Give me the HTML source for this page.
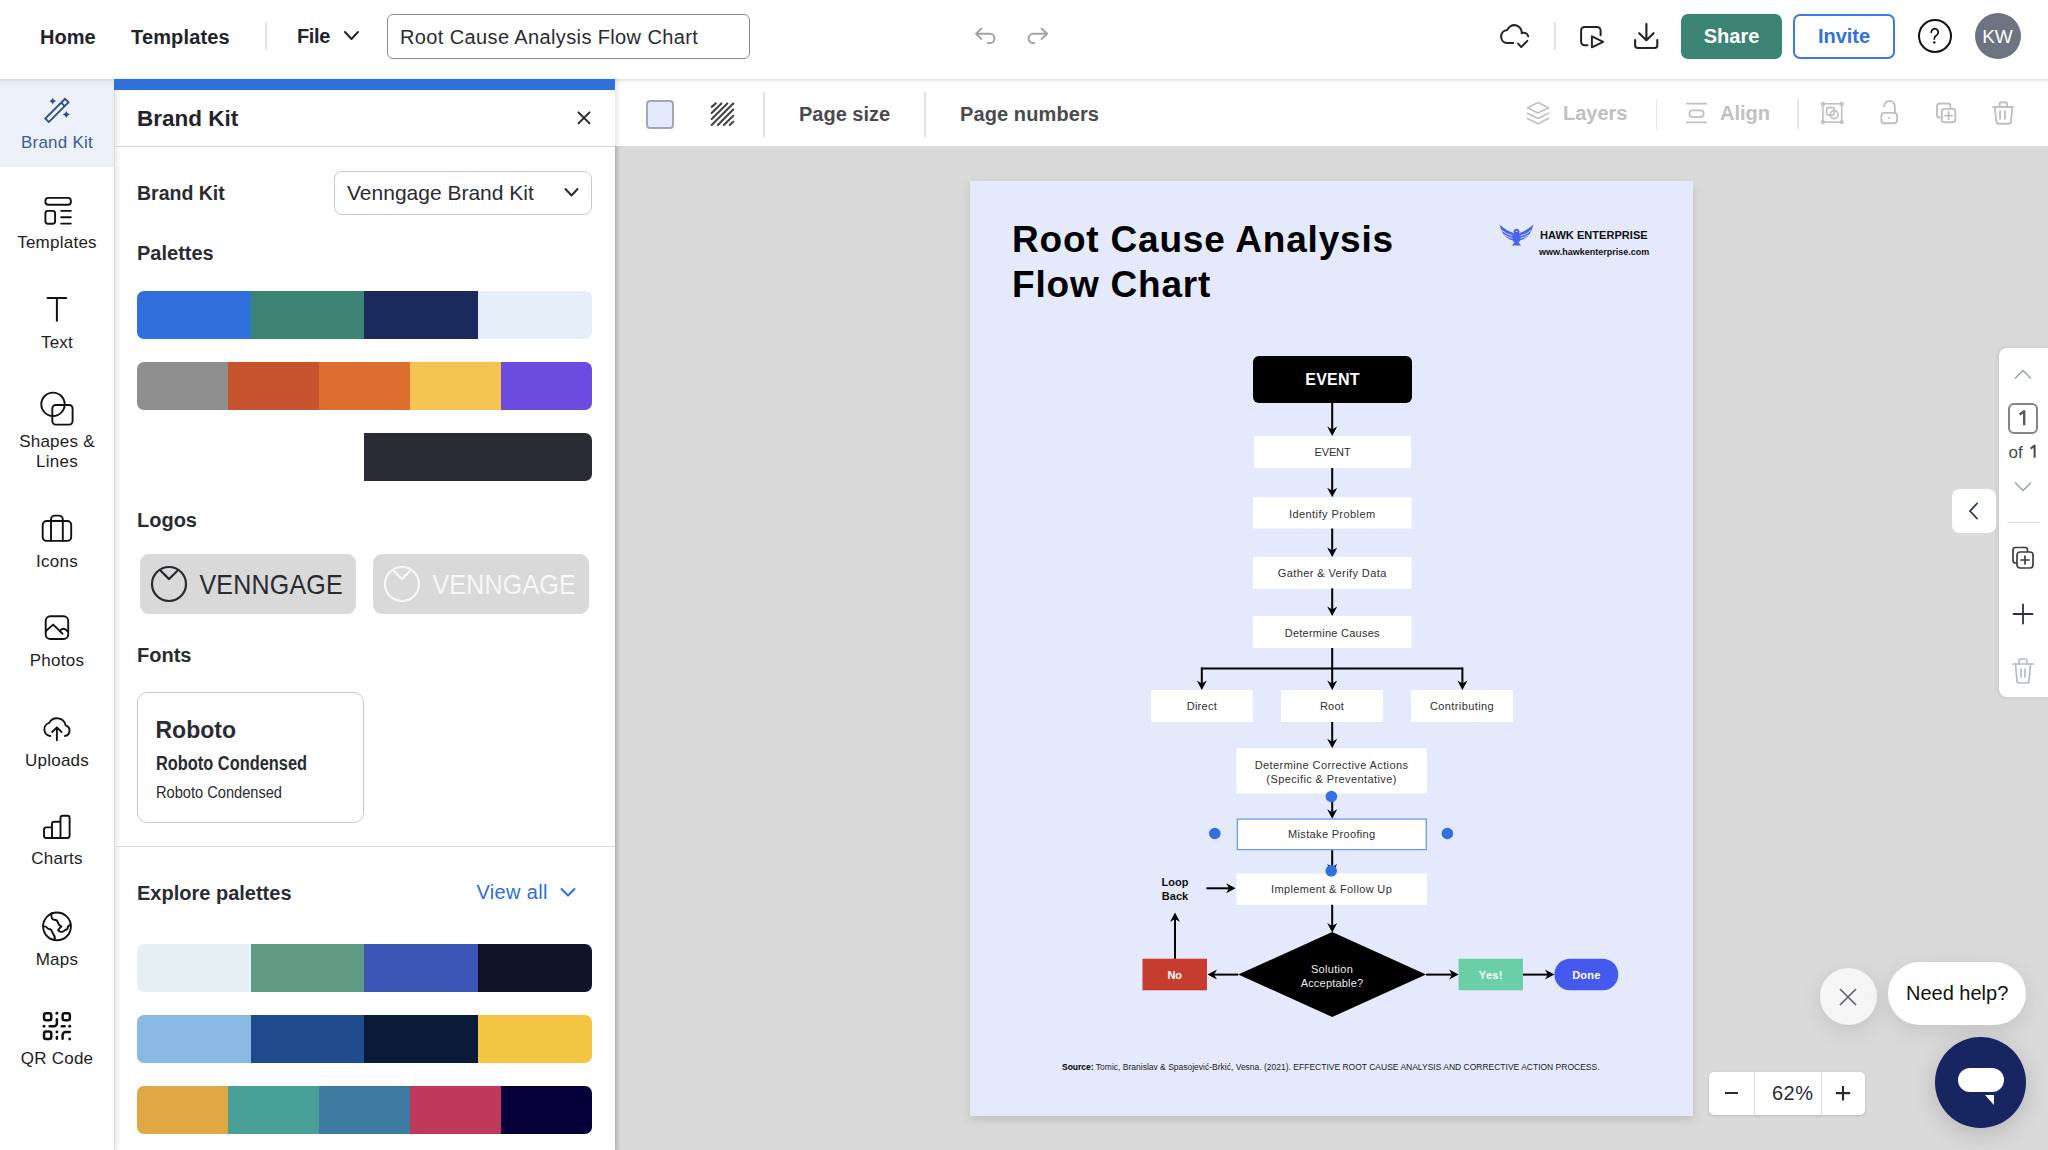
<!DOCTYPE html><html><head><meta charset="utf-8"><style>
html,body{margin:0;padding:0;}
body{width:2048px;height:1150px;position:relative;overflow:hidden;background:#dadada;font-family:"Liberation Sans", sans-serif;}
.a{position:absolute;box-sizing:border-box;}
.t{position:absolute;white-space:nowrap;}
</style></head><body>

<div class="a" style="left:615px;top:146px;width:1433px;height:1004px;background:#dadada;"></div>
<div class="a" style="left:970px;top:181px;width:723px;height:935px;background:#e4e9fc;box-shadow:0 4px 10px rgba(0,0,0,0.12);"></div>
<div class="a" style="left:0px;top:0px;width:2048px;height:79px;background:#fff;"></div>
<div style="position:absolute;left:0;top:0;width:2048px;height:79px;">
<div class="t" style="left:40px;top:26.50px;font-size:20px;font-weight:700;color:#23232b;line-height:20px;">Home</div>
<div class="t" style="left:131px;top:26.50px;font-size:20px;font-weight:700;color:#23232b;line-height:20px;letter-spacing:0.15px;">Templates</div>
<div class="a" style="left:265px;top:22px;width:2px;height:28px;background:#e3e3e3;"></div>
<div class="t" style="left:297px;top:26.00px;font-size:20px;font-weight:700;color:#23232b;line-height:20px;letter-spacing:-0.4px;">File</div>
<svg class="a" style="left:342px;top:28px;" width="20" height="16" viewBox="0 0 20 16" fill="none"><polyline points="3,4 9.5,11 16,4" stroke="#23232b" stroke-width="2" stroke-linecap="round" stroke-linejoin="round"/></svg>
<div class="a" style="left:387px;top:14px;width:363px;height:45px;border:1.5px solid #8c8c8c;border-radius:6px;background:#fff;"></div>
<div class="t" style="left:400px;top:26.50px;font-size:20px;font-weight:400;color:#2b2b33;line-height:20px;letter-spacing:0.38px;">Root Cause Analysis Flow Chart</div>
<svg class="a" style="left:972px;top:24px;" width="28" height="24" viewBox="0 0 28 24" fill="none"><path d="M9.2,4.7 L4.1,9.8 L9.2,14.9 M4.1,9.8 H17.8 A4.65,4.65 0 0 1 17.8,19.1 H15.8" stroke="#a2a2a8" stroke-width="2" stroke-linecap="round" stroke-linejoin="round"/></svg>
<svg class="a" style="left:1024px;top:24px;" width="28" height="24" viewBox="0 0 28 24" fill="none"><path d="M17.5,4.7 L23.2,9.8 L17.5,14.9 M23.2,9.8 H9.2 A4.65,4.65 0 0 0 9.2,19.1 H10.2" stroke="#a2a2a8" stroke-width="2" stroke-linecap="round" stroke-linejoin="round"/></svg>
<svg class="a" style="left:1496px;top:20px;" width="36" height="32" viewBox="0 0 36 32" fill="none"><path d="M17.3,23.1 H10.7 A6.6,6.6 0 0 1 11.2,10 A7.5,7.5 0 0 1 25.7,13.2 A4.6,4.6 0 0 1 32.2,16.3" stroke="#23232b" stroke-width="2" stroke-linecap="round" stroke-linejoin="round"/><path d="M22.1,23.6 L25.2,27.1 L31.3,20.9" stroke="#23232b" stroke-width="2" stroke-linecap="round" stroke-linejoin="round"/></svg>
<div class="a" style="left:1554px;top:22px;width:2px;height:28px;background:#e3e3e3;"></div>
<svg class="a" style="left:1576px;top:22px;" width="32" height="30" viewBox="0 0 32 30" fill="none"><path d="M11.5,23.2 H8.6 A3.5,3.5 0 0 1 5.1,19.7 V8.5 A3.5,3.5 0 0 1 8.6,5 H21.1 A3.5,3.5 0 0 1 24.6,8.5 V13.2" stroke="#23232b" stroke-width="2" stroke-linecap="round" stroke-linejoin="round"/><path d="M15.9,14.3 L27.2,19.8 L15.9,25.3 Z" stroke="#23232b" stroke-width="2" stroke-linejoin="round"/></svg>
<svg class="a" style="left:1630px;top:20px;" width="32" height="32" viewBox="0 0 32 32" fill="none"><path d="M16.4,4 V20 M9.2,13.2 L16.4,20.3 L23.6,13.2 M5.1,20 V25.3 A2.7,2.7 0 0 0 7.8,28 H24.6 A2.7,2.7 0 0 0 27.3,25.3 V20" stroke="#23232b" stroke-width="2.1" stroke-linecap="round" stroke-linejoin="round"/></svg>
<div class="a" style="left:1681px;top:13.5px;width:101px;height:45.5px;background:#3b8474;border-radius:7px;"></div>
<div class="t" style="left:1681px;top:26.00px;font-size:20px;font-weight:700;color:#fff;line-height:20px;width:101px;text-align:center;">Share</div>
<div class="a" style="left:1793px;top:14px;width:102px;height:45px;border:2px solid #3b78e7;border-radius:7px;background:#fff;"></div>
<div class="t" style="left:1793px;top:26.00px;font-size:20px;font-weight:700;color:#3270dc;line-height:20px;width:102px;text-align:center;">Invite</div>
<svg class="a" style="left:1916px;top:17px;" width="38" height="38" viewBox="0 0 38 38" fill="none"><circle cx="19" cy="19" r="16" stroke="#111" stroke-width="2"/><path d="M15.3,15.2 A3.5,3.5 0 1 1 20.6,18.2 Q18.3,19.4 18.3,22" stroke="#111" stroke-width="1.7" stroke-linecap="round"/><circle cx="18.3" cy="25.4" r="1.2" fill="#111"/></svg>
<div class="a" style="left:1974.5px;top:13px;width:46px;height:46px;background:#6b7480;border-radius:50%;"></div>
<div class="t" style="left:1974.5px;top:27.00px;font-size:19px;font-weight:400;color:#fff;line-height:19px;width:46px;text-align:center;">KW</div>
</div>
<div class="a" style="left:0px;top:79px;width:114px;height:1071px;background:#fff;"></div>
<div class="a" style="left:0px;top:79px;width:114px;height:88px;background:#ebf0f9;"></div>
<div class="t" style="left:0px;top:134.10px;font-size:17px;font-weight:400;color:#3d5b92;line-height:17px;letter-spacing:0.25px;width:114px;text-align:center;">Brand Kit</div>
<div class="t" style="left:0px;top:233.50px;font-size:17px;font-weight:400;color:#1d1d24;line-height:17px;letter-spacing:0.25px;width:114px;text-align:center;">Templates</div>
<div class="t" style="left:0px;top:333.50px;font-size:17px;font-weight:400;color:#1d1d24;line-height:17px;letter-spacing:0.25px;width:114px;text-align:center;">Text</div>
<div class="t" style="left:0px;top:433.40px;font-size:17px;font-weight:400;color:#1d1d24;line-height:17px;letter-spacing:0.25px;width:114px;text-align:center;">Shapes &amp;</div>
<div class="t" style="left:0px;top:552.60px;font-size:17px;font-weight:400;color:#1d1d24;line-height:17px;letter-spacing:0.25px;width:114px;text-align:center;">Icons</div>
<div class="t" style="left:0px;top:652.10px;font-size:17px;font-weight:400;color:#1d1d24;line-height:17px;letter-spacing:0.25px;width:114px;text-align:center;">Photos</div>
<div class="t" style="left:0px;top:751.80px;font-size:17px;font-weight:400;color:#1d1d24;line-height:17px;letter-spacing:0.25px;width:114px;text-align:center;">Uploads</div>
<div class="t" style="left:0px;top:850.40px;font-size:17px;font-weight:400;color:#1d1d24;line-height:17px;letter-spacing:0.25px;width:114px;text-align:center;">Charts</div>
<div class="t" style="left:0px;top:950.70px;font-size:17px;font-weight:400;color:#1d1d24;line-height:17px;letter-spacing:0.25px;width:114px;text-align:center;">Maps</div>
<div class="t" style="left:0px;top:1049.90px;font-size:17px;font-weight:400;color:#1d1d24;line-height:17px;letter-spacing:0.25px;width:114px;text-align:center;">QR Code</div>
<div class="t" style="left:0px;top:453.00px;font-size:17px;font-weight:400;color:#1d1d24;line-height:17px;letter-spacing:0.25px;width:114px;text-align:center;">Lines</div>
<svg class="a" style="left:0;top:0" width="114" height="1150" viewBox="0 0 114 1150"><g transform="translate(56.9,110.4) rotate(-45)" stroke="#2f4f85" stroke-width="1.9" fill="none" stroke-linejoin="miter"><rect x="-13.9" y="-2.5" width="27.8" height="5"/><line x1="8.6" y1="-2.5" x2="8.6" y2="2.5"/></g><path d="M52.7,97.69999999999999 Q53.448,100.35199999999999 56.1,101.1 Q53.448,101.848 52.7,104.5 Q51.952000000000005,101.848 49.300000000000004,101.1 Q51.952000000000005,100.35199999999999 52.7,97.69999999999999 Z" fill="#2f4f85"/><path d="M66.3,110.9 Q67.092,113.708 69.89999999999999,114.5 Q67.092,115.292 66.3,118.1 Q65.508,115.292 62.699999999999996,114.5 Q65.508,113.708 66.3,110.9 Z" fill="#2f4f85"/><g stroke="#111" stroke-width="1.9" fill="none" stroke-linecap="round" stroke-linejoin="round"><rect x="45.4" y="197.9" width="25.5" height="6.9" rx="3"/><rect x="45.4" y="210.9" width="9.7" height="12.8" rx="2.5"/><path d="M61.2,210.9 H70.8 M61.2,217.3 H70.8 M61.2,223.6 H70.8"/><path d="M47.5,297.9 H66.2 M56.9,297.9 V320.8" stroke-width="2"/><circle cx="53" cy="404.3" r="11.7"/><rect x="52.3" y="405" width="20.3" height="19.6" rx="3.5"/><rect x="42.7" y="521" width="28.5" height="19.9" rx="4"/><path d="M51,540.9 V519.6 A4,4 0 0 1 55,515.6 H58.8 A4,4 0 0 1 62.8,519.6 V540.9"/><rect x="45.7" y="616.3" width="22.5" height="22.7" rx="4.5"/><path d="M45.9,631 L53.2,624.6 L62.6,633.7"/><path d="M60.3,630.4 Q63.5,626.5 67.9,631.5"/><path d="M50.3,736 A6.7,6.7 0 0 1 49.2,722.9 A8.8,8.8 0 0 1 65.6,725.3 A5.5,5.5 0 0 1 65,736"/><path d="M56.9,740.3 V727.6 M52.2,732 L56.9,727.3 L61.6,732"/><path d="M44,835.8 V829.6 A2.2,2.2 0 0 1 46.2,827.4 H52 V823.9 A2.2,2.2 0 0 1 54.2,821.7 H60.5 V818 A2.2,2.2 0 0 1 62.7,815.8 H67.4 A2.2,2.2 0 0 1 69.6,818 V835.8 A2.2,2.2 0 0 1 67.4,838 H46.2 A2.2,2.2 0 0 1 44,835.8 Z M52,827.4 V838 M60.5,821.7 V838"/><circle cx="57" cy="926.4" r="13.9"/><path d="M51.5,913.2 Q51,919.5 54,919.8 Q57.3,919.5 57.8,922.6 Q58.6,925 61.5,926.6 Q59,928.4 58.2,930.2 Q59.5,932.5 63,931.6 Q65,929.8 67.4,929 Q67.6,926 70.3,924.6"/><path d="M43.2,926.4 Q46,926 47.6,928.2 Q48.6,929.6 50.5,929.1 Q52,930.6 52.6,933 Q55,935.5 55,939.8"/></g><g stroke="#111" stroke-width="2.5" fill="none" stroke-linecap="round" stroke-linejoin="round"><rect x="44.05" y="1013.35" width="7.2" height="6.9" rx="2"/><rect x="62.65" y="1013.35" width="7.2" height="6.9" rx="2"/><rect x="44.05" y="1031.55" width="7.2" height="7.5" rx="2"/><path d="M56.9,1019.2 V1023.3 A3,3 0 0 1 53.9,1026.3 H49.6"/><path d="M61.8,1026.3 H64.6"/><path d="M56.9,1037 V1038.8"/><path d="M62.6,1038.8 V1035 A3,3 0 0 1 65.6,1032 H69.8"/></g><circle cx="56.9" cy="1013.3" r="1.45" fill="#111"/><circle cx="44" cy="1026.3" r="1.45" fill="#111"/><circle cx="69.7" cy="1026.3" r="1.45" fill="#111"/><circle cx="56.9" cy="1031.9" r="1.45" fill="#111"/><circle cx="69.7" cy="1039" r="1.45" fill="#111"/></svg>
<div class="a" style="left:114px;top:79px;width:501px;height:1071px;background:#fff;box-shadow:2px 0 4px rgba(0,0,0,0.13);"></div>
<div class="a" style="left:114px;top:79px;width:1px;height:1071px;background:#dcdcdc;"></div>
<div class="a" style="left:115px;top:79px;width:6px;height:1071px;background:linear-gradient(to right, rgba(0,0,0,0.07), rgba(0,0,0,0));"></div>
<div class="a" style="left:114px;top:79px;width:501px;height:11px;background:#3070dc;"></div>
<div class="t" style="left:137px;top:107.85px;font-size:22.5px;font-weight:700;color:#23232b;line-height:22.5px;">Brand Kit</div>
<svg class="a" style="left:572px;top:106px;" width="24" height="24" viewBox="0 0 24 24" fill="none"><path d="M6.5,6.3 L17.5,17.3 M17.5,6.3 L6.5,17.3" stroke="#23232b" stroke-width="1.9" stroke-linecap="round"/></svg>
<div class="a" style="left:114px;top:146px;width:501px;height:1.2px;background:#d9d9d9;"></div>
<div class="t" style="left:137px;top:184.25px;font-size:19.5px;font-weight:700;color:#2b2b33;line-height:19.5px;">Brand Kit</div>
<div class="a" style="left:333.5px;top:170.5px;width:258px;height:44px;border:1.5px solid #c9c9c9;border-radius:8px;background:#fff;"></div>
<div class="t" style="left:347px;top:181.50px;font-size:21px;font-weight:400;color:#2b2b33;line-height:21px;">Venngage Brand Kit</div>
<svg class="a" style="left:562px;top:184px;" width="20" height="16" viewBox="0 0 20 16" fill="none"><polyline points="3.5,5 9.5,11.5 15.5,5" stroke="#2b2b33" stroke-width="2" stroke-linecap="round" stroke-linejoin="round"/></svg>
<div class="t" style="left:137px;top:243.20px;font-size:20px;font-weight:700;color:#2b2b33;line-height:20px;">Palettes</div>
<div class="a" style="left:137px;top:291px;width:454.5px;height:48px;border-radius:7px;overflow:hidden;"><div style="position:absolute;left:0.00px;top:0;width:114.22px;height:48px;background:#3070dc"></div><div style="position:absolute;left:113.62px;top:0;width:114.22px;height:48px;background:#3b8474"></div><div style="position:absolute;left:227.25px;top:0;width:114.22px;height:48px;background:#1b2a5c"></div><div style="position:absolute;left:340.88px;top:0;width:114.22px;height:48px;background:#e6eef9"></div></div>
<div class="a" style="left:137px;top:362px;width:454.5px;height:48px;border-radius:7px;overflow:hidden;"><div style="position:absolute;left:0.00px;top:0;width:91.50px;height:48px;background:#8f8f8f"></div><div style="position:absolute;left:90.90px;top:0;width:91.50px;height:48px;background:#c6552f"></div><div style="position:absolute;left:181.80px;top:0;width:91.50px;height:48px;background:#dc6f30"></div><div style="position:absolute;left:272.70px;top:0;width:91.50px;height:48px;background:#f5c451"></div><div style="position:absolute;left:363.60px;top:0;width:91.50px;height:48px;background:#6c4be0"></div></div>
<div class="a" style="left:364px;top:433px;width:227.5px;height:48px;background:#2a2b35;border-radius:0 7px 7px 0;"></div>
<div class="t" style="left:137px;top:510.00px;font-size:20px;font-weight:700;color:#2b2b33;line-height:20px;">Logos</div>
<div class="a" style="left:139.5px;top:554px;width:216px;height:59.5px;background:#d9d9d9;border-radius:9px;"></div>
<div class="a" style="left:372.5px;top:554px;width:216px;height:59.5px;background:#d9d9d9;border-radius:9px;"></div>
<svg class="a" style="left:149px;top:563px;" width="40" height="42" viewBox="0 0 40 42" fill="none"><circle cx="20" cy="21" r="17" stroke="#2a2a30" stroke-width="2.2"/><path d="M10.7,6.8 L20.1,16.1 L28.9,7.2" stroke="#2a2a30" stroke-width="2.2" stroke-linejoin="round"/></svg>
<div class="t" style="left:199.5px;top:572.50px;font-size:25px;font-weight:400;color:#2a2a30;line-height:25px;letter-spacing:0.2px;transform:scaleY(1.09);transform-origin:0 21px;">VENNGAGE</div>
<svg class="a" style="left:382px;top:563px;" width="40" height="42" viewBox="0 0 40 42" fill="none"><circle cx="20" cy="21" r="17" stroke="#f7f7f7" stroke-width="2.2"/><path d="M10.7,6.8 L20.1,16.1 L28.9,7.2" stroke="#f7f7f7" stroke-width="2.2" stroke-linejoin="round"/></svg>
<div class="t" style="left:432.5px;top:572.50px;font-size:25px;font-weight:400;color:#f7f7f7;line-height:25px;letter-spacing:0.2px;transform:scaleY(1.09);transform-origin:0 21px;">VENNGAGE</div>
<div class="t" style="left:137px;top:645.00px;font-size:20px;font-weight:700;color:#2b2b33;line-height:20px;">Fonts</div>
<div class="a" style="left:137px;top:691.8px;width:226.5px;height:131.3px;border:1.7px solid #c8c8c8;border-radius:10px;background:#fff;"></div>
<div class="t" style="left:155.5px;top:719.40px;font-size:23px;font-weight:700;color:#2b2b33;line-height:23px;">Roboto</div>
<div class="t" style="left:155.5px;top:754.45px;font-size:19.5px;font-weight:700;color:#2b2b33;line-height:19.5px;transform:scaleX(0.84);transform-origin:0 0;">Roboto Condensed</div>
<div class="t" style="left:155.5px;top:783.90px;font-size:17px;font-weight:400;color:#2b2b33;line-height:17px;transform:scaleX(0.86);transform-origin:0 0;">Roboto Condensed</div>
<div class="a" style="left:114px;top:845.5px;width:501px;height:1.5px;background:#dedede;"></div>
<div class="t" style="left:137px;top:882.80px;font-size:20px;font-weight:700;color:#2b2b33;line-height:20px;">Explore palettes</div>
<div class="t" style="left:476.5px;top:882.30px;font-size:20px;font-weight:400;color:#2f6fd6;line-height:20px;letter-spacing:0.35px;">View all</div>
<svg class="a" style="left:556px;top:882px;" width="24" height="20" viewBox="0 0 24 20" fill="none"><polyline points="5.5,7 12,13.5 18.5,7" stroke="#2f6fd6" stroke-width="2" stroke-linecap="round" stroke-linejoin="round"/></svg>
<div class="a" style="left:137px;top:944px;width:454.5px;height:48px;border-radius:7px;overflow:hidden;"><div style="position:absolute;left:0.00px;top:0;width:114.22px;height:48px;background:#e6eff3"></div><div style="position:absolute;left:113.62px;top:0;width:114.22px;height:48px;background:#5e9a84"></div><div style="position:absolute;left:227.25px;top:0;width:114.22px;height:48px;background:#3d55b4"></div><div style="position:absolute;left:340.88px;top:0;width:114.22px;height:48px;background:#0f1428"></div></div>
<div class="a" style="left:137px;top:1015px;width:454.5px;height:48px;border-radius:7px;overflow:hidden;"><div style="position:absolute;left:0.00px;top:0;width:114.22px;height:48px;background:#87b9e3"></div><div style="position:absolute;left:113.62px;top:0;width:114.22px;height:48px;background:#1f4a8c"></div><div style="position:absolute;left:227.25px;top:0;width:114.22px;height:48px;background:#0a1b3a"></div><div style="position:absolute;left:340.88px;top:0;width:114.22px;height:48px;background:#f5c443"></div></div>
<div class="a" style="left:137px;top:1086px;width:454.5px;height:48px;border-radius:7px;overflow:hidden;"><div style="position:absolute;left:0.00px;top:0;width:91.50px;height:48px;background:#e0a845"></div><div style="position:absolute;left:90.90px;top:0;width:91.50px;height:48px;background:#4aa096"></div><div style="position:absolute;left:181.80px;top:0;width:91.50px;height:48px;background:#3e7aa0"></div><div style="position:absolute;left:272.70px;top:0;width:91.50px;height:48px;background:#c0385a"></div><div style="position:absolute;left:363.60px;top:0;width:91.50px;height:48px;background:#05003a"></div></div>
<div class="a" style="left:615px;top:79px;width:1433px;height:67px;background:#fff;"></div>
<div class="a" style="left:615px;top:79px;width:1433px;height:7px;background:linear-gradient(to bottom, rgba(0,0,0,0.11), rgba(0,0,0,0.03) 40%, rgba(0,0,0,0));"></div>
<div class="a" style="left:0px;top:79px;width:114px;height:7px;background:linear-gradient(to bottom, rgba(0,0,0,0.09), rgba(0,0,0,0.03) 40%, rgba(0,0,0,0));"></div>
<div class="a" style="left:615px;top:79px;width:6px;height:1071px;background:linear-gradient(to right, rgba(0,0,0,0.08), rgba(0,0,0,0));"></div>
<div class="a" style="left:646px;top:100px;width:27.8px;height:28.5px;background:#e4e9fc;border:2px solid #a2a8b5;border-radius:4px;"></div>
<svg class="a" style="left:700px;top:95px;" width="40" height="40" viewBox="0 0 40 40" fill="none"><g stroke="#444" stroke-width="2.1" stroke-linecap="round"><path d="M11.7,11.9 L15.8,8.4"/><path d="M11.7,18.1 L21.4,8.4"/><path d="M11.7,24 L27.3,8.4"/><path d="M11.7,29.9 L33.2,8.4"/><path d="M17.9,29.9 L33.2,14.6"/><path d="M23.8,29.9 L33.2,20.8"/><path d="M29.7,29.9 L33.2,26.7"/></g></svg>
<div class="a" style="left:763px;top:91.5px;width:1.5px;height:45.5px;background:#e2e2e2;"></div>
<div class="t" style="left:799px;top:103.60px;font-size:20px;font-weight:700;color:#4a4a4f;line-height:20px;">Page size</div>
<div class="a" style="left:924px;top:91.5px;width:1.5px;height:45.5px;background:#e2e2e2;"></div>
<div class="t" style="left:960px;top:103.60px;font-size:20px;font-weight:700;color:#4a4a4f;line-height:20px;letter-spacing:0.1px;">Page numbers</div>
<svg class="a" style="left:1522px;top:98px;" width="32" height="30" viewBox="0 0 32 30" fill="none"><g stroke="#c0c0c0" stroke-width="1.7" stroke-linejoin="round" stroke-linecap="round" fill="none"><path d="M16,4.6 L26.5,9.8 L16,15 L5.5,9.8 Z"/><path d="M5.5,15.2 L16,20.4 L26.5,15.2"/><path d="M5.5,20.5 L16,25.7 L26.5,20.5"/></g></svg>
<div class="t" style="left:1563px;top:102.60px;font-size:20px;font-weight:700;color:#c0c0c0;line-height:20px;">Layers</div>
<div class="a" style="left:1655.5px;top:99px;width:1.5px;height:30px;background:#e6e6e6;"></div>
<svg class="a" style="left:1684px;top:100px;" width="26" height="28" viewBox="0 0 26 28" fill="none"><g stroke="#c0c0c0" stroke-width="1.7" stroke-linecap="round" fill="none"><path d="M2.8,3.6 H22.3"/><path d="M2.8,22.4 H22.3"/><rect x="5.4" y="10.3" width="14.2" height="6.8" rx="3"/></g></svg>
<div class="t" style="left:1720px;top:102.60px;font-size:20px;font-weight:700;color:#c0c0c0;line-height:20px;">Align</div>
<div class="a" style="left:1797px;top:99px;width:1.5px;height:30px;background:#e6e6e6;"></div>
<svg class="a" style="left:1818px;top:100px;" width="30" height="28" viewBox="0 0 30 28" fill="none"><g stroke="#c0c0c0" stroke-width="1.6" fill="none"><rect x="4.9" y="3.8" width="18.8" height="18.3"/><rect x="8.6" y="7.6" width="7.6" height="7.5" rx="1.5"/><circle cx="16.2" cy="14.6" r="4"/></g><g fill="#c0c0c0"><rect x="3.1" y="2" width="3.6" height="3.6"/><rect x="21.9" y="2" width="3.6" height="3.6"/><rect x="3.1" y="20.3" width="3.6" height="3.6"/><rect x="21.9" y="20.3" width="3.6" height="3.6"/></g></svg>
<svg class="a" style="left:1876px;top:98px;" width="26" height="30" viewBox="0 0 26 30" fill="none"><g stroke="#c0c0c0" stroke-width="1.9" stroke-linecap="round" fill="none"><path d="M8.1,8.5 A5.4,5.4 0 0 1 18.9,8.4 V14.9"/><rect x="5.4" y="14.9" width="15.7" height="10.3" rx="3"/></g><circle cx="13.3" cy="19.8" r="1.1" fill="#c0c0c0"/></svg>
<svg class="a" style="left:1932px;top:99px;" width="28" height="28" viewBox="0 0 28 28" fill="none"><g stroke="#c0c0c0" stroke-width="1.9" stroke-linecap="round" stroke-linejoin="round" fill="none"><path d="M8,18.5 H7.5 A2.5,2.5 0 0 1 5,16 V7 A2.5,2.5 0 0 1 7.5,4.5 H15.9 A2.5,2.5 0 0 1 18.4,7 V9.9"/><rect x="9.8" y="9.9" width="13.5" height="13.4" rx="2.5"/><path d="M16.6,12.9 V20.3 M12.9,16.6 H20.3"/></g></svg>
<svg class="a" style="left:1989px;top:98px;" width="28" height="30" viewBox="0 0 28 30" fill="none"><g stroke="#c0c0c0" stroke-width="1.9" stroke-linecap="round" stroke-linejoin="round" fill="none"><path d="M4.1,9 H24"/><path d="M10.6,9 V6 A1.8,1.8 0 0 1 12.4,4.2 H16.3 A1.8,1.8 0 0 1 18.1,6 V9"/><path d="M5.7,9 L7.5,24 A2,2 0 0 0 9.5,25.7 H19.9 A2,2 0 0 0 21.9,24 L23.4,9"/><path d="M11.1,13.3 V20.9 M15.9,13.3 V20.9"/></g></svg>
<div class="a" style="left:1999px;top:348px;width:60px;height:349px;background:#fff;border-radius:8px;box-shadow:-1px 0 4px rgba(0,0,0,0.10);"></div>
<svg class="a" style="left:2012px;top:364px;" width="22" height="20" viewBox="0 0 22 20" fill="none"><polyline points="3.5,14 11,6.5 18.5,14" stroke="#9aa3ad" stroke-width="1.6" stroke-linecap="round" stroke-linejoin="round"/></svg>
<div class="a" style="left:2007.5px;top:403px;width:30.8px;height:30.5px;border:2px solid #858585;border-radius:6px;"></div>
<svg class="a" style="left:2000px;top:400px;" width="48" height="62" viewBox="0 0 48 62" fill="none"><path d="M19.6,14.6 L24.2,11.3 V25.2" stroke="#55595f" stroke-width="2.4" stroke-linejoin="round"/><path d="M30.6,48.6 L34.6,45.6 V57.8" stroke="#46484c" stroke-width="2" stroke-linejoin="round"/></svg>
<div class="t" style="left:2008.5px;top:443.80px;font-size:17px;font-weight:400;color:#46484c;line-height:17px;">of</div>
<svg class="a" style="left:2012px;top:477px;" width="22" height="20" viewBox="0 0 22 20" fill="none"><polyline points="3.5,6 11,13.5 18.5,6" stroke="#9aa3ad" stroke-width="1.6" stroke-linecap="round" stroke-linejoin="round"/></svg>
<div class="a" style="left:2006.5px;top:521.5px;width:33.5px;height:1.2px;background:#d8dde3;"></div>
<svg class="a" style="left:2009px;top:544px;" width="28" height="28" viewBox="0 0 28 28" fill="none"><g stroke="#3a3d42" stroke-width="1.7" stroke-linecap="round" stroke-linejoin="round"><path d="M7.5,19 H6.5 A2.5,2.5 0 0 1 4,16.5 V6 A2.5,2.5 0 0 1 6.5,3.5 H16 A2.5,2.5 0 0 1 18.5,6 V7.5"/><rect x="8" y="8" width="16" height="16" rx="3"/><path d="M16,12 V20 M12,16 H20"/></g></svg>
<svg class="a" style="left:2010px;top:601px;" width="26" height="26" viewBox="0 0 26 26" fill="none"><path d="M13,3.5 V22.5 M3.5,13 H22.5" stroke="#26324a" stroke-width="1.8" stroke-linecap="round"/></svg>
<svg class="a" style="left:2009px;top:656px;" width="28" height="30" viewBox="0 0 28 30" fill="none"><g stroke="#b7bcc3" stroke-width="1.7" stroke-linecap="round" stroke-linejoin="round"><path d="M4,8 H24"/><path d="M10,8 V5 A2,2 0 0 1 12,3 H16 A2,2 0 0 1 18,5 V8"/><path d="M6.5,8 L8,25 A2,2 0 0 0 10,27 H18 A2,2 0 0 0 20,25 L21.5,8"/><path d="M12,13 V21 M16,13 V21"/></g></svg>
<div class="a" style="left:1952px;top:489px;width:44px;height:43.5px;background:#fff;border-radius:8px;"></div>
<svg class="a" style="left:1962px;top:499px;" width="24" height="24" viewBox="0 0 24 24" fill="none"><polyline points="15,4.5 8,12 15,19.5" stroke="#26324a" stroke-width="1.8" stroke-linecap="round" stroke-linejoin="round"/></svg>
<div class="a" style="left:1709px;top:1072px;width:156px;height:42.5px;background:#fff;border-radius:5px;box-shadow:0 1px 3px rgba(0,0,0,0.15);"></div>
<div class="a" style="left:1753.5px;top:1072px;width:1px;height:42.5px;background:#dcdcdc;"></div>
<div class="a" style="left:1820.5px;top:1072px;width:1px;height:42.5px;background:#dcdcdc;"></div>
<div class="a" style="left:1724.5px;top:1092px;width:13px;height:2.2px;background:#2a2b30;"></div>
<div class="t" style="left:1772px;top:1082.80px;font-size:20px;font-weight:400;color:#2a2b30;line-height:20px;letter-spacing:0.5px;">62%</div>
<svg class="a" style="left:1833px;top:1083px;" width="20" height="20" viewBox="0 0 20 20" fill="none"><path d="M10,3 V17.5 M2.8,10.2 H17.2" stroke="#2a2b30" stroke-width="2.2"/></svg>
<div class="a" style="left:1819.5px;top:968px;width:57px;height:57px;background:#f5f5f5;border-radius:50%;box-shadow:0 6px 22px rgba(0,0,0,0.10);"></div>
<svg class="a" style="left:1836px;top:985px;" width="24" height="24" viewBox="0 0 24 24" fill="none"><path d="M4,4 L20,20 M20,4 L4,20" stroke="#5c6066" stroke-width="1.6"/></svg>
<div class="a" style="left:1888px;top:962px;width:138px;height:63px;background:#fff;border-radius:32px;box-shadow:0 6px 22px rgba(0,0,0,0.10);"></div>
<div class="t" style="left:1906px;top:983.30px;font-size:20px;font-weight:400;color:#111;line-height:20px;">Need help?</div>
<div class="a" style="left:1935px;top:1036.5px;width:91px;height:91px;background:#172560;border-radius:50%;box-shadow:0 6px 24px rgba(0,0,0,0.16);"></div>
<div class="a" style="left:1957.5px;top:1068px;width:46px;height:23.5px;background:#fff;border-radius:12px;"></div>
<svg class="a" style="left:1984px;top:1094px;" width="12" height="13" viewBox="0 0 12 13" fill="none"><path d="M1,1 H10 V11 Z" fill="#fff"/></svg>
<div class="t" style="left:1012px;top:221.40px;font-size:37px;font-weight:700;color:#000;line-height:37px;letter-spacing:0.8px;">Root Cause Analysis</div>
<div class="t" style="left:1012px;top:265.50px;font-size:37px;font-weight:700;color:#000;line-height:37px;letter-spacing:0.8px;">Flow Chart</div>
<svg class="a" style="left:1498px;top:222px;" width="38" height="26" viewBox="0 0 38 26" fill="none"><g fill="#4a63ef"><path d="M1.5,2.5 Q8,8.5 15.5,11 L15.5,18.5 Q5,17 1.5,2.5 Z"/><path d="M35.5,2.5 Q29,8.5 21.5,11 L21.5,18.5 Q32,17 35.5,2.5 Z"/><circle cx="18.5" cy="9.6" r="2.9"/><ellipse cx="18.5" cy="15.5" rx="4.2" ry="5.8"/><path d="M13.8,23.5 L18.5,18 L23.2,23.5 Z"/></g><g stroke="#e4e8fb" stroke-width="0.9" fill="none"><path d="M3.2,8 Q8.5,12.5 14.5,13.8"/><path d="M6.2,12.8 Q10,15.5 14.5,16.3"/><path d="M33.8,8 Q28.5,12.5 22.5,13.8"/><path d="M30.8,12.8 Q27,15.5 22.5,16.3"/></g><circle cx="18.5" cy="9.2" r="0.8" fill="#e4e8fb"/></svg>
<div class="t" style="left:1540px;top:230.10px;font-size:11px;font-weight:700;color:#111;line-height:11px;letter-spacing:0.05px;">HAWK ENTERPRISE</div>
<div class="t" style="left:1539px;top:247.70px;font-size:9px;font-weight:700;color:#111;line-height:9px;">www.hawkenterprise.com</div>
<svg class="a" style="left:0;top:0" width="2048" height="1150" viewBox="0 0 2048 1150"><rect x="1253" y="356" width="159" height="47" rx="6" fill="#000"/><line x1="1332.2" y1="403" x2="1332.2" y2="432" stroke="#000" stroke-width="2"/><polygon points="1332.2,436 1327.2,426.5 1332.2,429.5 1337.2,426.5" fill="#000"/><rect x="1254" y="436" width="157" height="32" rx="0" fill="#fff"/><rect x="1253" y="497.3" width="158.5" height="31.19999999999999" rx="0" fill="#fff"/><rect x="1253" y="557" width="158.5" height="31.799999999999955" rx="0" fill="#fff"/><rect x="1253" y="616" width="158.5" height="32" rx="0" fill="#fff"/><line x1="1332.2" y1="468" x2="1332.2" y2="493.3" stroke="#000" stroke-width="2"/><polygon points="1332.2,497.3 1327.2,487.8 1332.2,490.8 1337.2,487.8" fill="#000"/><line x1="1332.2" y1="528.5" x2="1332.2" y2="553" stroke="#000" stroke-width="2"/><polygon points="1332.2,557 1327.2,547.5 1332.2,550.5 1337.2,547.5" fill="#000"/><line x1="1332.2" y1="588.3" x2="1332.2" y2="612" stroke="#000" stroke-width="2"/><polygon points="1332.2,616 1327.2,606.5 1332.2,609.5 1337.2,606.5" fill="#000"/><line x1="1332.2" y1="648" x2="1332.2" y2="686" stroke="#000" stroke-width="2"/><line x1="1201.8" y1="668.4" x2="1462.4" y2="668.4" stroke="#000" stroke-width="2"/><line x1="1201.8" y1="667.4" x2="1201.8" y2="686" stroke="#000" stroke-width="2"/><line x1="1462.4" y1="667.4" x2="1462.4" y2="686" stroke="#000" stroke-width="2"/><polygon points="1201.8,690 1196.8,680.5 1201.8,683.5 1206.8,680.5" fill="#000"/><polygon points="1332.2,690 1327.2,680.5 1332.2,683.5 1337.2,680.5" fill="#000"/><polygon points="1462.4,690 1457.4,680.5 1462.4,683.5 1467.4,680.5" fill="#000"/><rect x="1151" y="690" width="101.70000000000005" height="32" rx="0" fill="#fff"/><rect x="1281" y="690" width="102" height="32" rx="0" fill="#fff"/><rect x="1411" y="690" width="102" height="32" rx="0" fill="#fff"/><line x1="1332.2" y1="722" x2="1332.2" y2="744.3" stroke="#000" stroke-width="2"/><polygon points="1332.2,748.3 1327.2,738.8 1332.2,741.8 1337.2,738.8" fill="#000"/><rect x="1236.4" y="748.3" width="190.39999999999986" height="45.10000000000002" rx="0" fill="#fff"/><line x1="1332.2" y1="798" x2="1332.2" y2="814.7" stroke="#000" stroke-width="2"/><polygon points="1332.2,818.7 1327.2,809.2 1332.2,812.2 1337.2,809.2" fill="#000"/><rect x="1237.4" y="819.1" width="188.89999999999986" height="30.5" rx="0" fill="#fff" stroke="#6a9cf0" stroke-width="1.3"/><line x1="1332.2" y1="850.2" x2="1332.2" y2="869" stroke="#000" stroke-width="2"/><polygon points="1332.2,873.5 1327.2,864.0 1332.2,867.0 1337.2,864.0" fill="#000"/><rect x="1236.4" y="873.5" width="190.39999999999986" height="31.299999999999955" rx="0" fill="#fff"/><line x1="1332.2" y1="904.8" x2="1332.2" y2="928.5" stroke="#000" stroke-width="2"/><polygon points="1332.2,932.5 1327.2,923.0 1332.2,926.0 1337.2,923.0" fill="#000"/><polygon points="1238.2,974.5 1332.2,932.1 1426,974.5 1332.2,1016.9" fill="#000"/><rect x="1142.5" y="958.7" width="64.5" height="31.59999999999991" rx="0" fill="#c63d2f"/><rect x="1458.6" y="958.7" width="64.40000000000009" height="31.59999999999991" rx="0" fill="#6acfa6"/><rect x="1554.4" y="958.7" width="63.899999999999864" height="31.59999999999991" rx="15.8" fill="#4659ee"/><line x1="1238.2" y1="974.6" x2="1211" y2="974.6" stroke="#000" stroke-width="2"/><polygon points="1207.5,974.6 1217.0,969.6 1214.0,974.6 1217.0,979.6" fill="#000"/><line x1="1426" y1="974.6" x2="1455" y2="974.6" stroke="#000" stroke-width="2"/><polygon points="1458.6,974.6 1449.1,969.6 1452.1,974.6 1449.1,979.6" fill="#000"/><line x1="1523" y1="974.6" x2="1551" y2="974.6" stroke="#000" stroke-width="2"/><polygon points="1554.4,974.6 1544.9,969.6 1547.9,974.6 1544.9,979.6" fill="#000"/><line x1="1175" y1="958.7" x2="1175" y2="916" stroke="#000" stroke-width="2"/><polygon points="1175,912.6 1170,922.1 1175,919.1 1180,922.1" fill="#000"/><line x1="1206.4" y1="888.3" x2="1232" y2="888.3" stroke="#000" stroke-width="2"/><polygon points="1235.6,888.3 1226.1,883.3 1229.1,888.3 1226.1,893.3" fill="#000"/><circle cx="1331.4" cy="796.5" r="5.8" fill="#3170e0"/><circle cx="1214.8" cy="833.5" r="5.8" fill="#3170e0"/><circle cx="1447.4" cy="833.5" r="5.8" fill="#3170e0"/><circle cx="1331.2" cy="870.8" r="5.8" fill="#3170e0"/></svg>
<div class="t" style="left:1253px;top:371.90px;font-size:16px;font-weight:700;color:#fff;line-height:16px;letter-spacing:0.2px;width:159px;text-align:center;">EVENT</div>
<div class="t" style="left:1254px;top:447.00px;font-size:11px;font-weight:400;color:#303030;line-height:11px;letter-spacing:-0.1px;width:157px;text-align:center;">EVENT</div>
<div class="t" style="left:1253px;top:508.70px;font-size:11px;font-weight:400;color:#303030;line-height:11px;letter-spacing:0.45px;width:158.5px;text-align:center;">Identify Problem</div>
<div class="t" style="left:1253px;top:568.20px;font-size:11px;font-weight:400;color:#303030;line-height:11px;letter-spacing:0.4px;width:158.5px;text-align:center;">Gather &amp; Verify Data</div>
<div class="t" style="left:1253px;top:627.80px;font-size:11px;font-weight:400;color:#303030;line-height:11px;letter-spacing:0.25px;width:158.5px;text-align:center;">Determine Causes</div>
<div class="t" style="left:1151px;top:701.20px;font-size:11px;font-weight:400;color:#303030;line-height:11px;letter-spacing:0.25px;width:101.70000000000005px;text-align:center;">Direct</div>
<div class="t" style="left:1281px;top:701.20px;font-size:11px;font-weight:400;color:#303030;line-height:11px;letter-spacing:0.2px;width:102px;text-align:center;">Root</div>
<div class="t" style="left:1411px;top:701.20px;font-size:11px;font-weight:400;color:#303030;line-height:11px;letter-spacing:0.4px;width:102px;text-align:center;">Contributing</div>
<div class="t" style="left:1236.4px;top:760.40px;font-size:11px;font-weight:400;color:#303030;line-height:11px;letter-spacing:0.4px;width:190.39999999999986px;text-align:center;">Determine Corrective Actions</div>
<div class="t" style="left:1236.4px;top:774.30px;font-size:11px;font-weight:400;color:#303030;line-height:11px;letter-spacing:0.4px;width:190.39999999999986px;text-align:center;">(Specific &amp; Preventative)</div>
<div class="t" style="left:1237px;top:829.00px;font-size:11px;font-weight:400;color:#303030;line-height:11px;letter-spacing:0.35px;width:189.5999999999999px;text-align:center;">Mistake Proofing</div>
<div class="t" style="left:1236.4px;top:884.30px;font-size:11px;font-weight:400;color:#303030;line-height:11px;letter-spacing:0.35px;width:190.39999999999986px;text-align:center;">Implement &amp; Follow Up</div>
<div class="t" style="left:1150px;top:877.30px;font-size:11px;font-weight:700;color:#111;line-height:11px;width:50px;text-align:center;">Loop</div>
<div class="t" style="left:1150px;top:890.80px;font-size:11px;font-weight:700;color:#111;line-height:11px;width:50px;text-align:center;">Back</div>
<div class="t" style="left:1142.5px;top:970.30px;font-size:11px;font-weight:700;color:#fff;line-height:11px;width:64.5px;text-align:center;">No</div>
<div class="t" style="left:1458.6px;top:970.30px;font-size:11px;font-weight:700;color:#fff;line-height:11px;letter-spacing:0.3px;width:64.40000000000009px;text-align:center;">Yes!</div>
<div class="t" style="left:1554.4px;top:970.30px;font-size:11px;font-weight:700;color:#fff;line-height:11px;letter-spacing:0.2px;width:63.899999999999864px;text-align:center;">Done</div>
<div class="t" style="left:1280px;top:964.40px;font-size:11px;font-weight:400;color:#ececec;line-height:11px;letter-spacing:0.3px;width:104px;text-align:center;">Solution</div>
<div class="t" style="left:1280px;top:978.30px;font-size:11px;font-weight:400;color:#ececec;line-height:11px;letter-spacing:0.2px;width:104px;text-align:center;">Acceptable?</div>
<div class="t" style="left:1062px;top:1063.25px;font-size:8.5px;font-weight:400;color:#222;line-height:8.5px;"><b style="color:#000">Source:</b> Tomic, Branislav &amp; Spasojević-Brkić, Vesna. (2021). EFFECTIVE ROOT CAUSE ANALYSIS AND CORRECTIVE ACTION PROCESS.</div>
</body></html>
